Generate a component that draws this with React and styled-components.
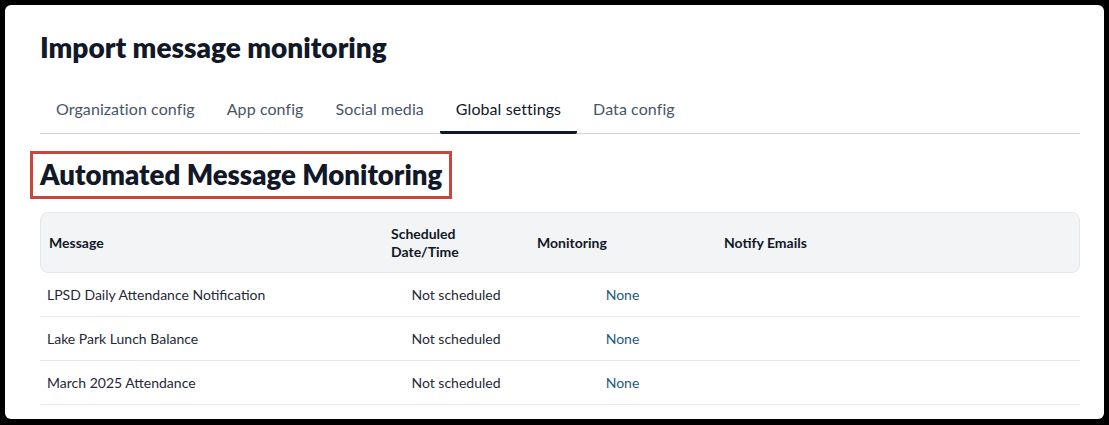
import React from 'react';
import styled, { createGlobalStyle } from 'styled-components';

const GlobalStyle = createGlobalStyle`
  html, body {
    margin: 0;
    padding: 0;
    background: #000000;
  }

  body {
    font-family: Lato, "Noto Sans", sans-serif;
    color: #111827;
  }
`;

const Panel = styled.div`
  box-sizing: border-box;
  display: flex;
  flex-direction: column;
  align-items: flex-start;
  height: 414px;
  margin: 5px;
  padding: 26px 24px 0 35px;
  background: #ffffff;
  border-radius: 6px;
  overflow: hidden;
`;

const Title = styled.h1`
  margin: 0;
  font-size: 28px;
  line-height: 32px;
  font-weight: 800;
  color: #111827;
`;

const TabBar = styled.nav`
  display: flex;
  align-self: stretch;
  margin-top: 24px;
  border-bottom: 1px solid #d4d4d8;
`;

const Tab = styled.button`
  margin-bottom: -1px;
  padding: 12px 16px 12px;
  font-family: inherit;
  font-size: 16px;
  line-height: 20px;
  letter-spacing: 0.08px;
  color: ${({ $active }) => ($active ? '#111827' : '#475569')};
  background: none;
  border: none;
  border-bottom: 3px solid ${({ $active }) => ($active ? '#0f172a' : 'transparent')};
  border-radius: 2px;
  cursor: pointer;
`;

const HeadingBox = styled.div`
  margin-top: 17px;
  margin-left: -10px;
  padding: 0 7px;
  border: 3px solid #c9463d;
`;

const Heading = styled.h2`
  margin: 0;
  font-size: 27.6px;
  line-height: 42px;
  font-weight: 800;
  color: #111827;
`;

const Table = styled.div`
  align-self: stretch;
  margin-top: 13px;
`;

const columns = '343px 146px 187px 1fr';

const HeadRow = styled.div`
  display: grid;
  grid-template-columns: ${columns};
  align-items: center;
  height: 61px;
  box-sizing: border-box;
  background: #f3f4f6;
  border: 1px solid #e5e7eb;
  border-radius: 8px;
`;

const HeadCell = styled.div`
  padding-left: ${({ $first }) => ($first ? '8px' : '7px')};
  font-size: 14px;
  line-height: 18px;
  font-weight: 700;
  color: #111827;
`;

const Row = styled.div`
  display: grid;
  grid-template-columns: ${columns};
  align-items: center;
  height: 44px;
  box-sizing: border-box;
  border-bottom: 1px solid #e5e7eb;
`;

const Cell = styled.div`
  padding-left: ${({ $center }) => ($center ? '0' : '7px')};
  text-align: ${({ $center }) => ($center ? 'center' : 'left')};
  font-size: 14px;
  line-height: 18px;
  color: ${({ $link }) => ($link ? '#1e5a78' : '#1f2937')};
`;

const tabs = ['Organization config', 'App config', 'Social media', 'Global settings', 'Data config'];

const messages = [
  'LPSD Daily Attendance Notification',
  'Lake Park Lunch Balance',
  'March 2025 Attendance',
];

const App = () => (
  <>
    <GlobalStyle />
    <Panel>
      <Title>Import message monitoring</Title>
      <TabBar>
        {tabs.map((tab) => (
          <Tab key={tab} $active={tab === 'Global settings'}>{tab}</Tab>
        ))}
      </TabBar>
      <HeadingBox>
        <Heading>Automated Message Monitoring</Heading>
      </HeadingBox>
      <Table>
        <HeadRow>
          <HeadCell $first>Message</HeadCell>
          <HeadCell>Scheduled<br />Date/Time</HeadCell>
          <HeadCell>Monitoring</HeadCell>
          <HeadCell>Notify Emails</HeadCell>
        </HeadRow>
        {messages.map((msg) => (
          <Row key={msg}>
            <Cell>{msg}</Cell>
            <Cell $center>Not scheduled</Cell>
            <Cell $center $link>None</Cell>
            <Cell />
          </Row>
        ))}
      </Table>
    </Panel>
  </>
);

export default App;
